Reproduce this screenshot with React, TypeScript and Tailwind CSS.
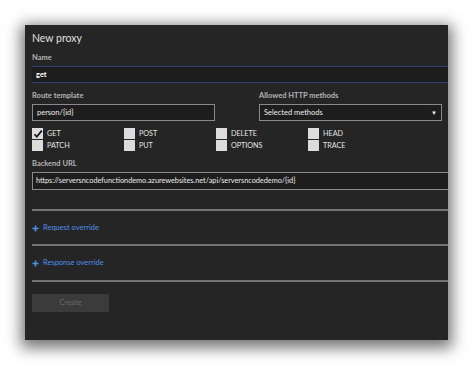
import React from 'react';

const FONT = { fontFamily: 'Lato, "Open Sans", "Liberation Sans", sans-serif' };

const METHODS: { label: string; checked?: boolean }[][] = [
  [{ label: 'GET', checked: true }, { label: 'POST' }, { label: 'DELETE' }, { label: 'HEAD' }],
  [{ label: 'PATCH' }, { label: 'PUT' }, { label: 'OPTIONS' }, { label: 'TRACE' }],
];

function Check({ label, checked }: { label: string; checked?: boolean }) {
  return (
    <div className="flex w-[92px] items-center gap-[4px]">
      <span className="flex h-[11px] w-[11px] items-center justify-center bg-[#dcdcdc]">
        {checked && (
          <svg viewBox="0 0 10 10" className="h-[10px] w-[10px]">
            <path d="M1.5 5.2 L3.8 7.8 L8.8 1.6" fill="none" stroke="#111" strokeWidth="1.7" />
          </svg>
        )}
      </span>
      <span className="text-[7.2px] leading-[10px] text-[#e4e4e4]">{label}</span>
    </div>
  );
}

function Label({ children, className = '' }: { children: React.ReactNode; className?: string }) {
  return (
    <div className={`text-[7.5px] font-bold leading-[10px] text-[#b4b4b4] ${className}`}>{children}</div>
  );
}

function Divider({ className = '' }: { className?: string }) {
  return <div className={`h-[2px] w-[430px] bg-[#747474] ${className}`} />;
}

function Plus() {
  return (
    <svg viewBox="0 0 8 8" className="h-[7px] w-[7px]">
      <path d="M4 0.5 V7.5 M0.5 4 H7.5" stroke="#4f8fe6" strokeWidth="1.8" />
    </svg>
  );
}

export default function App() {
  return (
    <div className="h-[366px] w-[474px] overflow-hidden bg-white pl-[25px] pt-[25px]" style={FONT}>
      <div className="h-[315px] w-[423px] overflow-hidden bg-[#252525] pl-[7px] pt-[5px] shadow-[0_4px_14px_4px_rgba(0,0,0,0.55)]">
        <div className="text-[10.5px] leading-[16px] text-[#e0e0e0]">New proxy</div>

        <Label className="mt-[7px]">Name</Label>
        <div className="mt-[3px] flex h-[17px] w-[430px] items-center border-y border-[#2f3e78] bg-[#1d1d1d] px-[4px] text-[7.5px] font-bold text-white">
          get
        </div>

        <div className="mt-[8px] flex gap-[44px]">
          <div>
            <Label>Route template</Label>
            <div className="mt-[3px] flex h-[17px] w-[183px] items-center border border-[#8a8a8a] bg-[#1d1d1d] px-[4px] text-[7.5px] text-[#ececec]">
              person/{'{id}'}
            </div>
          </div>
          <div>
            <Label>Allowed HTTP methods</Label>
            <div className="mt-[3px] flex h-[17px] w-[183px] items-center justify-between border border-[#8a8a8a] bg-[#1d1d1d] px-[4px] text-[7.5px] text-[#ececec]">
              <span>Selected methods</span>
              <span className="text-[6px]">▼</span>
            </div>
          </div>
        </div>

        <div className="mt-[7px] flex flex-col gap-[1px]">
          {METHODS.map((row, i) => (
            <div key={i} className="flex">
              {row.map((m) => (
                <Check key={m.label} label={m.label} checked={m.checked} />
              ))}
            </div>
          ))}
        </div>

        <Label className="mt-[8px]">Backend URL</Label>
        <div className="mt-[3px] flex h-[18px] w-[430px] items-center border border-[#8a8a8a] bg-[#1d1d1d] px-[3px] text-[7.3px] text-[#ececec]">
          https://serversncodefunctiondemo.azurewebsites.net/api/serversncodedemo/{'{id}'}
        </div>

        <Divider className="mt-[19px]" />
        <div className="mt-[11px] flex h-[12px] items-center gap-[4px] text-[7.5px] text-[#4f8fe6]">
          <Plus />
          <span>Request override</span>
        </div>
        <Divider className="mt-[10px]" />
        <div className="mt-[11px] flex h-[12px] items-center gap-[4px] text-[7.5px] text-[#4f8fe6]">
          <Plus />
          <span>Response override</span>
        </div>
        <Divider className="mt-[11px]" />

        <div className="mt-[12px] flex h-[18px] w-[77px] items-center justify-center bg-[#3b3b3b] text-[7.5px] text-[#6a6a6a]">
          Create
        </div>
      </div>
    </div>
  );
}
